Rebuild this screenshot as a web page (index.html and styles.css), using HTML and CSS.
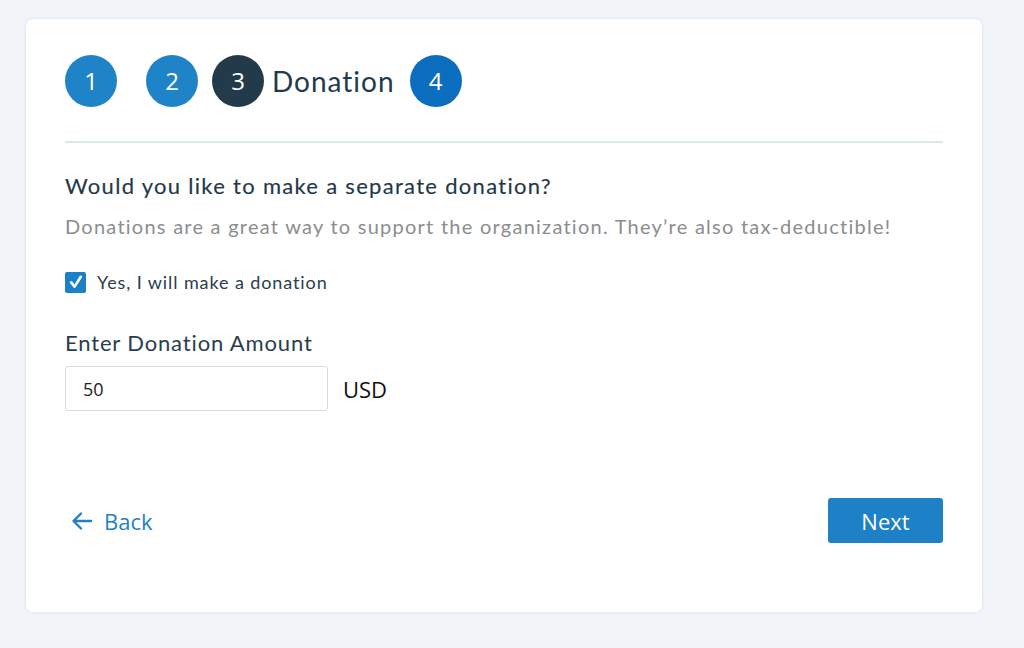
FILE: index.html
```html
<!DOCTYPE html>
<html lang="en">
<head>
<meta charset="utf-8">
<title>Donation</title>
<link rel="stylesheet" href="styles.css">
</head>
<body>
<main class="card">
  <div class="stepper">
    <span class="step step-done">1</span>
    <span class="step step-done step-two">2</span>
    <span class="step step-current">3</span>
    <span class="step-label">Donation</span>
    <span class="step step-next">4</span>
  </div>
  <hr class="divider">
  <h2 class="question">Would you like to make a separate donation?</h2>
  <p class="hint">Donations are a great way to support the organization. They’re also tax-deductible!</p>
  <label class="check-row">
    <span class="checkbox">
      <svg viewBox="0 0 20 20" width="20" height="20"><path d="M5.2 10.4 L8.6 14.6 L14.8 4.8" fill="none" stroke="#fff" stroke-width="2.6" stroke-linecap="round" stroke-linejoin="round"/></svg>
    </span>
    <span class="check-text">Yes, I will make a donation</span>
  </label>
  <div class="field-label">Enter Donation Amount</div>
  <div class="amount-row">
    <div class="amount-input">50</div>
    <span class="currency">USD</span>
  </div>
  <div class="actions">
    <a class="back">
      <svg viewBox="0 0 24 24" width="24" height="24"><path d="M21 12 H4 M11 4.5 L3.5 12 L11 19.5" fill="none" stroke="#1f80c5" stroke-width="2.4" stroke-linecap="round" stroke-linejoin="round"/></svg>
      <span>Back</span>
    </a>
    <button class="next">Next</button>
  </div>
</main>
</body>
</html>
```
FILE: styles.css
```css
html, body {
  margin: 0;
  padding: 0;
}
body {
  background: #f1f5fa;
  padding: 19px 0 0 26px;
  font-family: Lato, "Open Sans", sans-serif;
  height: 648px;
  box-sizing: border-box;
}
.card {
  width: 956px;
  height: 593px;
  box-sizing: border-box;
  background: #ffffff;
  border-radius: 7px;
  box-shadow: 0 0 3px rgba(160, 190, 220, 0.45);
  padding: 36px 39px 0 39px;
  display: flex;
  flex-direction: column;
}
.stepper {
  display: flex;
  align-items: center;
  height: 52px;
}
.step {
  width: 52px;
  height: 52px;
  border-radius: 50%;
  color: #fff;
  display: flex;
  align-items: center;
  justify-content: center;
  font-family: "Open Sans", sans-serif;
  font-size: 24px;
  line-height: 1;
}
.step-done { background: #1f83c7; }
.step-two { margin-left: 29px; }
.step-current { background: #233a4b; margin-left: 14px; }
.step-next { background: #0a6dbd; margin-left: 15px; }
.step-label {
  margin-left: 8px;
  font-size: 28px;
  color: #233a4b;
  letter-spacing: 1px;
}
.divider {
  border: 0;
  height: 2px;
  background: #dde8ee;
  margin: 34px 0 0 0;
}
.question {
  margin: 31px 0 0 0;
  font-size: 22px;
  font-weight: 400;
  color: #22384a;
  line-height: 24px;
  letter-spacing: 1.3px;
  -webkit-text-stroke: 0.15px #22384a;
}
.hint {
  margin: 16px 0 0 0;
  font-size: 20px;
  color: #8c8d8f;
  line-height: 24px;
  letter-spacing: 1.25px;
}
.check-row {
  display: flex;
  align-items: center;
  margin-top: 33px;
}
.checkbox {
  width: 21px;
  height: 21px;
  background: #1a80c8;
  border-radius: 2px;
  display: flex;
  align-items: center;
  justify-content: center;
}
.check-text {
  margin-left: 11px;
  font-size: 18px;
  color: #2a3d4e;
  letter-spacing: 0.9px;
}
.field-label {
  margin-top: 38px;
  font-size: 22px;
  color: #2a3d4e;
  line-height: 24px;
  letter-spacing: 0.85px;
}
.amount-row {
  display: flex;
  align-items: center;
  margin-top: 11px;
}
.amount-input {
  width: 263px;
  height: 45px;
  box-sizing: border-box;
  border: 1px solid #cfdde6;
  border-radius: 3px;
  padding-left: 17px;
  display: flex;
  align-items: center;
  font-family: "Open Sans", sans-serif;
  font-size: 18px;
  color: #222;
}
.currency {
  margin-left: 15px;
  font-family: "Open Sans", sans-serif;
  font-size: 22px;
  color: #111;
}
.actions {
  display: flex;
  justify-content: space-between;
  align-items: center;
  margin-top: 87px;
}
.back {
  display: flex;
  align-items: center;
  gap: 10px;
  margin-left: 5px;
  color: #1f80c5;
  font-family: "Open Sans", sans-serif;
  font-size: 22px;
}
.next {
  width: 115px;
  height: 45px;
  border: 0;
  border-radius: 3px;
  background: #1e80c6;
  color: #fff;
  font-family: "Open Sans", sans-serif;
  font-size: 22px;
}
```
